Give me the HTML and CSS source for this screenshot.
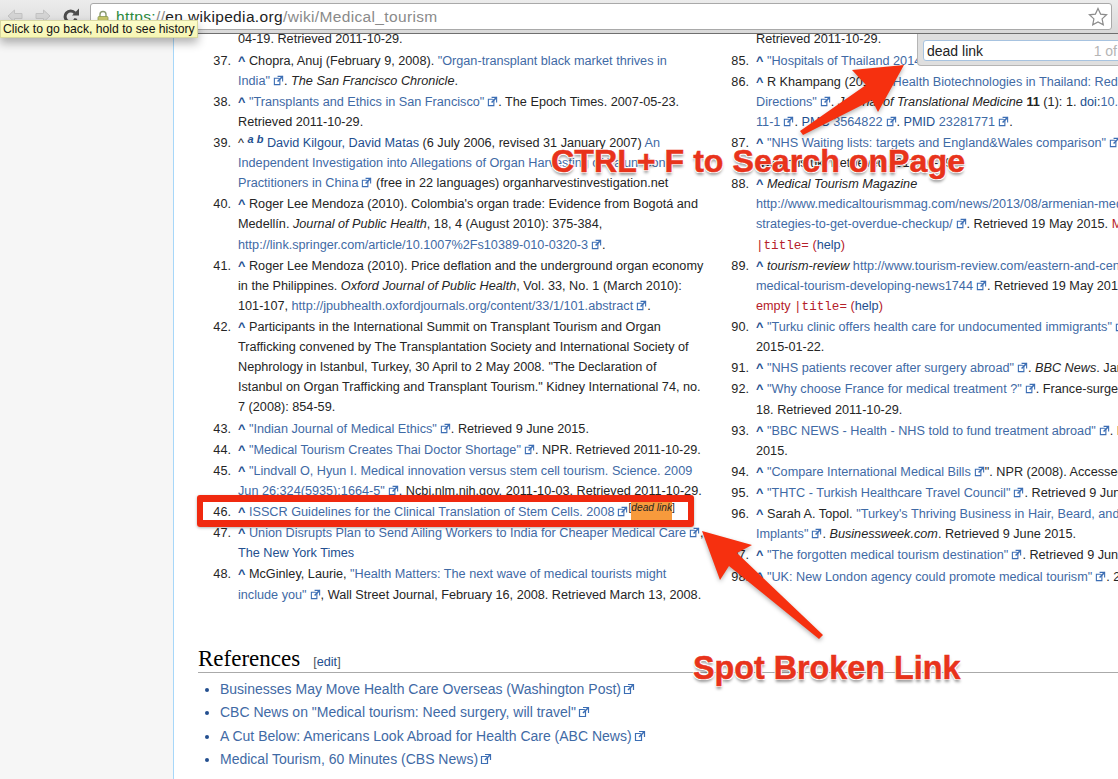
FILE: index.html
```html
<!DOCTYPE html>
<html lang="en">
<head>
<meta charset="utf-8">
<title>Medical tourism</title>
<link rel="stylesheet" href="styles.css">
</head>
<body>
<svg class="defs" width="0" height="0" aria-hidden="true">
  <symbol id="ext" viewBox="0 0 12 12">
    <path d="M1.5 3.5h6v7h-6z" fill="none" stroke="#3c6eb4" stroke-width="1.2"/>
    <path d="M5 1.5h5.5v5.5" fill="#fff" stroke="#3c6eb4" stroke-width="1.2"/>
    <path d="M10.5 1.5L5 7" fill="none" stroke="#3c6eb4" stroke-width="1.6"/>
  </symbol>
</svg>
<header class="toolbar">
  <div class="nav">
    <svg class="navicon" viewBox="0 0 16 16"><path d="M7.500 2L1 8l6.500 6v-3.500H15v-5H7.500z" fill="#d4d4d4" stroke="#c2c2c2"/></svg>
    <svg class="navicon" viewBox="0 0 16 16"><path d="M8.500 2L15 8l-6.500 6v-3.500H1v-5h7.500z" fill="#d4d4d4" stroke="#c2c2c2"/></svg>
    <svg class="navicon" viewBox="0 0 16 16"><path d="M13 10.500a5.600 5.600 0 1 1-1-5.500" fill="none" stroke="#4a4a4a" stroke-width="3"/><path d="M9 7.500h7V.5z" fill="#4a4a4a"/></svg>
  </div>
  <div class="omnibox">
    <svg class="lock" viewBox="0 0 12 14"><path d="M3 7V4.500a3 3 0 0 1 6 0V7" fill="none" stroke="#8a9a70" stroke-width="1.400"/><rect x="1" y="6.500" width="10" height="7" rx="1" fill="#c8c86a" stroke="#8a9a50" stroke-width=".8"/></svg>
    <span class="url"><span class="https">https:</span><span class="dim">//</span>en.wikipedia.org<span class="dim">/wiki/Medical_tourism</span></span>
    <svg class="star" viewBox="0 0 20 20"><path d="M10 1.500l2.600 5.600 6 .7-4.500 4.100 1.200 6L10 15l-5.300 2.900 1.200-6L1.400 7.800l6-.7z" fill="#fff" stroke="#8c8c8c" stroke-width="1.200"/></svg>
  </div>
</header>
<div class="tooltip">Click to go back, hold to see history</div>
<div class="findbar"><div class="findinput"><span>dead link</span><span class="findcount">1 of</span></div></div>

<main class="page">
  <aside class="sidebar"></aside>
  <div class="content">
    <div class="columns">
      <div class="col">
        <p class="cont">04-19. Retrieved 2011-10-29.</p>
        <ol class="refs" start="37">
          <li><b class="up">^</b> Chopra, Anuj (February 9, 2008). <a href="#">"Organ-transplant black market thrives in<br>India"<svg class="e"><use href="#ext"/></svg></a>. <i>The San Francisco Chronicle</i>.</li>
          <li><b class="up">^</b> <a href="#">"Transplants and Ethics in San Francisco"<svg class="e"><use href="#ext"/></svg></a>. The Epoch Times. 2007-05-23.<br>Retrieved 2011-10-29.</li>
          <li>^ <sup><b><i>a b</i></b></sup> <a class="wl" href="#">David Kilgour, David Matas</a> (6 July 2006, revised 31 January 2007) <a href="#">An<br>Independent Investigation into Allegations of Organ Harvesting of Falun Gong<br>Practitioners in China<svg class="e"><use href="#ext"/></svg></a> (free in 22 languages) organharvestinvestigation.net</li>
          <li><b class="up">^</b> Roger Lee Mendoza (2010). Colombia's organ trade: Evidence from Bogotá and<br>Medellín. <i>Journal of Public Health</i>, 18, 4 (August 2010): 375-384,<br><a href="#">http://link.springer.com/article/10.1007%2Fs10389-010-0320-3<svg class="e"><use href="#ext"/></svg></a>.</li>
          <li><b class="up">^</b> Roger Lee Mendoza (2010). Price deflation and the underground organ economy<br>in the Philippines. <i>Oxford Journal of Public Health</i>, Vol. 33, No. 1 (March 2010):<br>101-107, <a href="#">http://jpubhealth.oxfordjournals.org/content/33/1/101.abstract<svg class="e"><use href="#ext"/></svg></a>.</li>
          <li><b class="up">^</b> Participants in the International Summit on Transplant Tourism and Organ<br>Trafficking convened by The Transplantation Society and International Society of<br>Nephrology in Istanbul, Turkey, 30 April to 2 May 2008. "The Declaration of<br>Istanbul on Organ Trafficking and Transplant Tourism." Kidney International 74, no.<br>7 (2008): 854-59.</li>
          <li><b class="up">^</b> <a href="#">"Indian Journal of Medical Ethics"<svg class="e"><use href="#ext"/></svg></a>. Retrieved 9 June 2015.</li>
          <li><b class="up">^</b> <a href="#">"Medical Tourism Creates Thai Doctor Shortage"<svg class="e"><use href="#ext"/></svg></a>. NPR. Retrieved 2011-10-29.</li>
          <li><b class="up">^</b> <a href="#">"Lindvall O, Hyun I. Medical innovation versus stem cell tourism. Science. 2009<br>Jun 26;324(5935):1664-5"<svg class="e"><use href="#ext"/></svg></a>. Ncbi.nlm.nih.gov. 2011-10-03. Retrieved 2011-10-29.</li>
          <li><b class="up">^</b> <a href="#">ISSCR Guidelines for the Clinical Translation of Stem Cells. 2008<svg class="e"><use href="#ext"/></svg></a><sup class="dead">[<i class="hit">dead link</i>]</sup></li>
          <li><b class="up">^</b> <a href="#">Union Disrupts Plan to Send Ailing Workers to India for Cheaper Medical Care<svg class="e"><use href="#ext"/></svg></a>,<br><a class="wl" href="#">The New York Times</a></li>
          <li><b class="up">^</b> McGinley, Laurie, <a href="#">"Health Matters: The next wave of medical tourists might<br>include you"<svg class="e"><use href="#ext"/></svg></a>, Wall Street Journal, February 16, 2008. Retrieved March 13, 2008.</li>
        </ol>
      </div>
      <div class="col">
        <p class="cont">Retrieved 2011-10-29.</p>
        <ol class="refs" start="85">
          <li><b class="up">^</b> <a href="#">"Hospitals of Thailand 2014"<svg class="e"><use href="#ext"/></svg></a>. Retrieved 2015-06-09.</li>
          <li><b class="up">^</b> R Khampang (2012). <a href="#">"Health Biotechnologies in Thailand: Redefining Policy<br>Directions"<svg class="e"><use href="#ext"/></svg></a>. <i>Journal of Translational Medicine</i> <b>11</b> (1): 1. <a class="wl" href="#">doi</a>:<a href="#">10.1186/1479-5876-<br>11-1<svg class="e"><use href="#ext"/></svg></a>. <a class="wl" href="#">PMC</a> <a href="#">3564822<svg class="e"><use href="#ext"/></svg></a>. <a class="wl" href="#">PMID</a> <a href="#">23281771<svg class="e"><use href="#ext"/></svg></a>.</li>
          <li><b class="up">^</b> <a href="#">"NHS Waiting lists: targets and England&amp;Wales comparison"<svg class="e"><use href="#ext"/></svg></a>.<br>www.nhs.uk. Retrieved 2011-10-29.</li>
          <li><b class="up">^</b> <i>Medical Tourism Magazine</i><br><a href="#">http://www.medicaltourismmag.com/news/2013/08/armenian-medical-tourism-<br>strategies-to-get-overdue-checkup/<svg class="e"><use href="#ext"/></svg></a>. Retrieved 19 May 2015. <span class="err">Missing or empty<br><code>|title=</code> (<a href="#">help</a>)</span></li>
          <li><b class="up">^</b> <i>tourism-review</i> <a href="#">http://www.tourism-review.com/eastern-and-central-europe-<br>medical-tourism-developing-news1744<svg class="e"><use href="#ext"/></svg></a>. Retrieved 19 May 2015. <span class="err">Missing or<br>empty <code>|title=</code> (<a href="#">help</a>)</span></li>
          <li><b class="up">^</b> <a href="#">"Turku clinic offers health care for undocumented immigrants"<svg class="e"><use href="#ext"/></svg></a>. Yle.<br>2015-01-22.</li>
          <li><b class="up">^</b> <a href="#">"NHS patients recover after surgery abroad"<svg class="e"><use href="#ext"/></svg></a>. <i>BBC News</i>. January 2015.</li>
          <li><b class="up">^</b> <a href="#">"Why choose France for medical treatment ?"<svg class="e"><use href="#ext"/></svg></a>. France-surgery.com. 2011-10-<br>18. Retrieved 2011-10-29.</li>
          <li><b class="up">^</b> <a href="#">"BBC NEWS - Health - NHS told to fund treatment abroad"<svg class="e"><use href="#ext"/></svg></a>. Retrieved 9 June<br>2015.</li>
          <li><b class="up">^</b> <a href="#">"Compare International Medical Bills<svg class="e"><use href="#ext"/></svg></a>". NPR (2008). Accessed 2011.</li>
          <li><b class="up">^</b> <a href="#">"THTC - Turkish Healthcare Travel Council"<svg class="e"><use href="#ext"/></svg></a>. Retrieved 9 June 2015.</li>
          <li><b class="up">^</b> Sarah A. Topol. <a href="#">"Turkey's Thriving Business in Hair, Beard, and Mustache<br>Implants"<svg class="e"><use href="#ext"/></svg></a>. <i>Businessweek.com</i>. Retrieved 9 June 2015.</li>
          <li><b class="up">^</b> <a href="#">"The forgotten medical tourism destination"<svg class="e"><use href="#ext"/></svg></a>. Retrieved 9 June 2015.</li>
          <li><b class="up">^</b> <a href="#">"UK: New London agency could promote medical tourism"<svg class="e"><use href="#ext"/></svg></a>. 2015.</li>
        </ol>
      </div>
    </div>
    <h2 class="heading">References<span class="edit">[<a class="wl" href="#">edit</a>]</span></h2>
    <ul class="links">
      <li><a href="#">Businesses May Move Health Care Overseas (Washington Post)<svg class="e"><use href="#ext"/></svg></a></li>
      <li><a href="#">CBC News on "Medical tourism: Need surgery, will travel"<svg class="e"><use href="#ext"/></svg></a></li>
      <li><a href="#">A Cut Below: Americans Look Abroad for Health Care (ABC News)<svg class="e"><use href="#ext"/></svg></a></li>
      <li><a href="#">Medical Tourism, 60 Minutes (CBS News)<svg class="e"><use href="#ext"/></svg></a></li>
    </ul>
  </div>
</main>

<div class="redbox"></div>
<svg class="arrows" viewBox="0 0 1118 779" aria-hidden="true">
  <path class="arrow" d="M904 65L852 70 866 85 800 131 803 135 872 100 878 112z"/>
  <path class="arrow" d="M702 531L752 545 737 553 823 635 819 639 729 566 720 580z"/>
</svg>
<div class="callout callout-find">CTRL+ F to Search onPage</div>
<div class="callout callout-broken">Spot Broken Link</div>
</body>
</html>
```
FILE: styles.css
```css
* { box-sizing: border-box; }
html, body { margin: 0; height: 100%; overflow: hidden; background: #fff; }
body { display: flex; flex-direction: column; font-family: "Liberation Sans", Arial, sans-serif; position: relative; }
.defs { position: absolute; }
.toolbar { flex: none; height: 34px; margin-bottom: -7px; background: linear-gradient(#ececec, #d9d9d9); border-bottom: 1px solid #6f6f6f; display: flex; align-items: flex-start; padding: 3px 0 0 7px; position: relative; z-index: 1; }
.nav { display: flex; gap: 12px; width: 83px; padding-top: 5px; }
.navicon { width: 16px; height: 16px; }
.omnibox { width: 1022px; height: 27px; background: #fff; border: 1px solid #a9a9a9; border-radius: 3px; display: flex; align-items: center; padding: 0 3px 0 6px; }
.lock { width: 12px; height: 14px; margin-right: 7px; }
.url { flex: 1; font-size: 15.500px; letter-spacing: .35px; color: #222; }
.https { color: #2a8a3c; }
.dim { color: #8a8a8a; }
.star { width: 20px; height: 20px; }

.tooltip { position: absolute; left: 0; top: 20px; height: 18px; width: 198px; background: linear-gradient(#fbfbc8, #f6f6b4); border: 1px solid #d8d8a0; box-shadow: 0 5px 10px rgba(0,0,0,.3); font-size: 12.200px; line-height: 16px; padding-left: 2px; color: #111; z-index: 3; white-space: nowrap; }
.findbar { position: absolute; left: 917px; top: 34px; width: 201px; height: 32px; background: #dfdfdf; border-left: 1px solid #b5b5b5; border-bottom: 1px solid #b5b5b5; border-radius: 0 0 0 4px; padding: 6px 0 0 5px; z-index: 3; }
.findinput { display: flex; justify-content: space-between; height: 21px; width: 200px; background: #fff; border: 1px solid #a7c3e0; border-radius: 3px; font-size: 14px; line-height: 20px; padding: 0 5px 0 3px; color: #222; }
.findcount { color: #b5b5b5; }

.page { flex: 1; display: flex; min-height: 0; }
.sidebar { width: 173px; flex: none; background: #f6f6f6; }
.content { flex: none; width: 945px; border-left: 1px solid #a7d7f9; padding: 2px 0 0 24px; font-size: 12.680px; line-height: 20.100px; color: #252525; }
.columns { display: grid; grid-template-columns: 518px 500px; height: 614px; white-space: nowrap; }
.col { min-width: 0; padding-left: 40px; }
.cont { margin: 0 0 1.500px; }
.refs { margin: 0; padding: 0; }
.refs li { margin-bottom: 1.050px; }
.refs li::marker { content: counter(list-item) ".  "; }
a { color: #3f6aa5; text-decoration: none; }
a.wl { color: #234f8f; }
.up { color: #234f8f; font-size: 12.680px; }
sup { font-size: 11px; line-height: 1; vertical-align: 4px; color: #234f8f; }
.e { width: 11px; height: 11px; margin: 0 0 -1px 3px; }
.dead { color: #252525; vertical-align: 5px; font-size: 10.200px; }
.hit { background: #f79a3c; padding-bottom: 8px; }
.err { color: #b5202a; }
code { font-family: "Liberation Mono", monospace; font-size: 12.600px; line-height: 1; }
.err a { color: #234f8f; }

.heading { margin: 0; font: 400 23px/32px "Liberation Serif", serif; color: #000; border-bottom: 1px solid #aaa; height: 30px; }
.edit { font: 400 12.680px "Liberation Sans", sans-serif; margin-left: 13px; color: #555; }
.links { margin: 5px 0 0 22px; padding: 0; font-size: 14px; line-height: 23.300px; list-style: disc; color: #234f8f; }
.links .e { width: 12px; height: 12px; margin-left: 2px; }

.redbox { position: absolute; left: 197px; top: 495px; width: 497px; height: 32px; border: solid #f0290f; border-width: 7px 6px; border-radius: 3px; z-index: 4; box-shadow: 0 1px 3px rgba(0,0,0,.3); }
.arrows { position: absolute; left: 0; top: 0; width: 1118px; height: 779px; z-index: 4; pointer-events: none; }
.arrow { fill: #f6300f; filter: drop-shadow(0 2px 2px rgba(0,0,0,.3)); }
.callout { position: absolute; z-index: 5; font-weight: 700; color: #e8331b; white-space: nowrap; -webkit-text-stroke: .5px #e8331b; text-shadow: 1px 1px 0 #fff, -1px -1px 0 #fff, 1px -1px 0 #fff, -1px 1px 0 #fff, 0 3px 3px rgba(0,0,0,.4); }
.callout-find { left: 551px; top: 141px; font-size: 32.200px; line-height: 40px; }
.callout-broken { left: 693px; top: 648px; font-size: 32.300px; line-height: 40px; }
```
